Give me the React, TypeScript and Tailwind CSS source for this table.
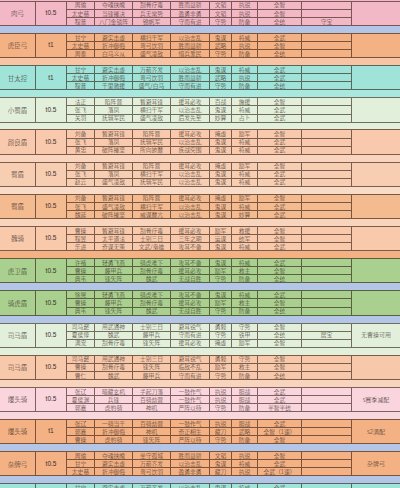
import React from "react";

type Group = {
  name: string;
  tier: string;
  bg: string;
  sep: string;
  note: string;
  rows: string[][];
};

const groups: Group[] = [
  {
    name: "肉弓", tier: "t0.5", bg: "bg-[#f2b8c5]", sep: "bg-[#b4c6e7]", note: "",
    rows: [
      ["周瑜", "夺魂挟魄", "刮骨疗毒", "胜而益骄", "文韬", "执锐", "全智", ""],
      ["太史慈", "当锋摧决", "兵无常势", "盈勇非勇", "文韬", "执锐", "全智", ""],
      ["程普", "八门金锁阵", "锦帆军", "守而有进", "守势", "防备", "全统", "守宝"],
    ],
  },
  {
    name: "虎臣弓", tier: "t1", bg: "bg-[#f4b183]", sep: "bg-[#f7c4a5]", note: "",
    rows: [
      ["甘宁", "避实击虚", "横扫千军", "以治击乱", "鬼谋", "将威", "全武", ""],
      ["太史慈", "折冲御侮", "弯弓饮羽", "胜而益骄", "武略", "执锐", "全智", ""],
      ["周泰", "白马义从", "盛气凌敌", "惜兵爱民", "守势", "防备", "全统", ""],
    ],
  },
  {
    name: "甘太控", tier: "t1", bg: "bg-[#a0e3d8]", sep: "bg-[#a8e8df]", note: "",
    rows: [
      ["甘宁", "避实击虚", "万箭齐发", "以治击乱", "鬼谋", "将威", "全武", ""],
      ["太史慈", "折冲御侮", "弯弓饮羽", "胜而益骄", "武略", "执锐", "全武", ""],
      ["程普", "千里驰援", "盛气/白马", "守而有进", "守势", "防备", "全统", ""],
    ],
  },
  {
    name: "小蜀盾", tier: "t0.5", bg: "bg-[#e2efda]", sep: "bg-[#e2efda]", note: "",
    rows: [
      ["法正", "陷阵营", "暂避其锋", "援其必攻", "百战", "施援", "全智", ""],
      ["张飞", "落凤", "横扫千军", "以治击乱", "鬼谋", "将威", "全武", ""],
      ["关羽", "抚辑军民", "盛气凌敌", "后发先至", "妙算", "占卜", "全武", ""],
    ],
  },
  {
    name: "颜良盾", tier: "t0.5", bg: "bg-[#f8c9ac]", sep: "bg-[#f9d3bb]", note: "",
    rows: [
      ["刘备", "暂避其锋", "陷阵营", "援其必攻", "掩虚", "励军", "全智", ""],
      ["张飞", "落凤", "抚辑军民", "以治击乱", "鬼谋", "将威", "全武", ""],
      ["黄忠", "破阵摧坚", "所向披靡", "疾战突围", "鬼谋", "将威", "全武", ""],
    ],
  },
  {
    name: "蜀盾", tier: "t0.5", bg: "bg-[#f8ceb3]", sep: "bg-[#f9dcc8]", note: "",
    rows: [
      ["刘备", "暂避其锋", "陷阵营", "援其必攻", "掩虚", "励军", "全智", ""],
      ["张飞", "落凤", "横扫千军", "以治击乱", "鬼谋", "将威", "全武", ""],
      ["赵云", "盛气凌敌", "抚辑军民", "以治击乱", "鬼谋", "将威", "全武", ""],
    ],
  },
  {
    name: "蜀盾", tier: "t0.5", bg: "bg-[#f4ba90]", sep: "bg-[#f8d4bc]", note: "",
    rows: [
      ["刘备", "暂避其锋", "陷阵营", "援其必攻", "掩虚", "励军", "全智", ""],
      ["张飞", "盛气凌敌", "横扫千军", "以治击乱", "鬼谋", "将威", "全武", ""],
      ["魏延", "破阵摧坚", "威谋靡亢", "以治击乱", "鬼谋", "妙算", "全武", ""],
    ],
  },
  {
    name: "魏骑", tier: "t0.5", bg: "bg-[#f8c9ab]", sep: "bg-[#f4b183]", note: "",
    rows: [
      ["曹操", "暂避其锋", "刮骨疗毒", "援其必攻", "励军", "救援", "全智", ""],
      ["程昱", "太平道法", "士别三日", "三年之期", "运谋", "统军", "全智", ""],
      ["乐进", "奇谋无策", "文武/枭雄", "攻其不备", "鬼谋", "将威", "全武", ""],
    ],
  },
  {
    name: "虎卫盾", tier: "t0.5", bg: "bg-[#a9d08e]", sep: "bg-[#b4c6e7]", note: "",
    rows: [
      ["许褚", "轻勇飞燕", "骑虎难下", "攻其不备", "鬼谋", "将威", "全武", ""],
      ["曹操", "藤甲兵", "刮骨疗毒", "援其必攻", "励军", "救主", "全智", ""],
      ["典韦", "锋矢阵", "魏武", "无战自胜", "守势", "防备", "全统", ""],
    ],
  },
  {
    name: "骑虎盾", tier: "t0.5", bg: "bg-[#a9d08e]", sep: "bg-[#b4c6e7]", note: "",
    rows: [
      ["徐晃", "轻勇飞燕", "骑虎难下", "攻其不备", "鬼谋", "将威", "全武", ""],
      ["曹操", "藤甲兵", "刮骨疗毒", "援其必攻", "励军", "救主", "全智", ""],
      ["典韦", "锋矢阵", "魏武", "无战自胜", "守势", "防备", "全统", ""],
    ],
  },
  {
    name: "司马盾", tier: "t0.5", bg: "bg-[#e2efda]", sep: "bg-[#e2efda]", note: "无曹操可用",
    rows: [
      ["司马懿", "用武通神", "士别三日", "避其锐气", "勇毅", "守势", "全智", ""],
      ["夏侯惇", "魏武", "藤甲兵", "守而有进", "守势", "铁甲", "全统", "居宝"],
      ["满宠", "刮骨疗毒", "锋矢阵", "援其必攻", "掩虚", "励军", "全智", ""],
    ],
  },
  {
    name: "司马盾", tier: "t0.5", bg: "bg-[#f8c8aa]", sep: "bg-[#f9d4bd]", note: "",
    rows: [
      ["司马懿", "用武通神", "士别三日", "避其锐气", "勇毅", "守势", "全智", ""],
      ["曹操", "刮骨疗毒", "锋矢阵", "临敌不乱", "励军", "救主", "全智", ""],
      ["曹仁", "魏武", "藤甲兵", "守而有进", "守势", "防备", "全统", ""],
    ],
  },
  {
    name: "爆头骑", tier: "t0.5", bg: "bg-[#fad5dd]", sep: "bg-[#f8d7de]", note: "s赛季减配",
    rows: [
      ["张辽", "暗藏玄机", "手起刀落", "一鼓作气", "执锐", "胆战", "全武", ""],
      ["夏侯渊", "兵锋", "百骑劫营", "一鼓作气", "执锐", "胆战", "全武", ""],
      ["郭嘉", "虎豹骑", "神机", "严阵以待", "守势", "防备", "半智半统", ""],
    ],
  },
  {
    name: "爆头骑", tier: "t1", bg: "bg-[#f4b183]", sep: "bg-[#b4c6e7]", note: "s2满配",
    rows: [
      ["张辽", "一骑当千", "百骑劫营", "一鼓作气", "执锐", "胆战", "全武", ""],
      ["郭嘉", "折冲御侮", "神机", "奇正相生", "藏刀", "武略", "全智（1速）", ""],
      ["曹操", "虎豹骑", "锋矢阵", "严阵以待", "守势", "防备", "全智", ""],
    ],
  },
  {
    name: "杂牌弓", tier: "t0.5", bg: "bg-[#f4b183]", sep: "bg-[#b4c6e7]", note: "杂牌弓",
    rows: [
      ["周瑜", "夺魂挟魄", "坐守孤城", "胜而益骄", "文韬", "执锐", "全智", ""],
      ["甘宁", "避实击虚", "万箭齐发", "以治击乱", "鬼谋", "将威", "全武", ""],
      ["太史慈", "折冲御侮", "弯弓饮羽", "盈勇非勇", "藏刀", "执锐", "全武（1速）", ""],
    ],
  },
  {
    name: "", tier: "", bg: "bg-[#a0e3d8]", sep: "bg-[#a8e8df]", note: "",
    rows: [
      ["甘宁", "避实击虚", "万箭齐发", "以治击乱", "鬼谋", "将威", "全武", ""],
      ["太史慈", "折冲御侮", "弯弓饮羽", "胜而益骄", "武略", "执锐", "全武", ""],
      ["程普", "千里驰援", "盛气凌敌", "守而有进", "守势", "防备", "全统", ""],
    ],
  },
];

const cell =
  "flex items-center justify-center border-r border-b border-[rgba(40,20,10,0.6)] overflow-hidden whitespace-nowrap leading-none";

function GroupBlock({ g }: { g: Group }) {
  return (
    <div className="flex flex-col shrink-0">
      <div
        className={`grid grid-cols-[36px_31px_28px_38px_38px_39px_22px_26px_44px_50px_48px] grid-rows-[8.1px_8.1px_8.1px] border-t border-[rgba(40,20,10,0.6)] ${g.bg}`}
      >
        <div className={`${cell} row-span-3 text-[6.5px]`}>{g.name}</div>
        <div className={`${cell} row-span-3 text-[6.5px] font-['Liberation_Sans',sans-serif]`}>{g.tier}</div>
        {g.rows.map((r, ri) => (
          <React.Fragment key={ri}>
            {r.map((t, ci) => (
              <div key={ci} className={`${cell} text-[5.8px]`}>
                {t}
              </div>
            ))}
            {ri === 0 && (
              <div className="row-span-3 flex items-center justify-center border-b border-[rgba(40,20,10,0.6)] text-[6px] leading-none whitespace-nowrap">
                {g.note}
              </div>
            )}
          </React.Fragment>
        ))}
      </div>
      <div className={`h-[6.9px] ${g.sep}`} />
    </div>
  );
}

export default function App() {
  return (
    <div className="w-[400px] h-[488px] overflow-hidden bg-[#f2b8c5] pt-[0.8px] text-[#3a302b] font-['Noto_Sans_CJK_SC','Noto_Sans',sans-serif] font-light">
      <div className="flex flex-col">
        {groups.map((g, i) => (
          <GroupBlock key={i} g={g} />
        ))}
      </div>
    </div>
  );
}
